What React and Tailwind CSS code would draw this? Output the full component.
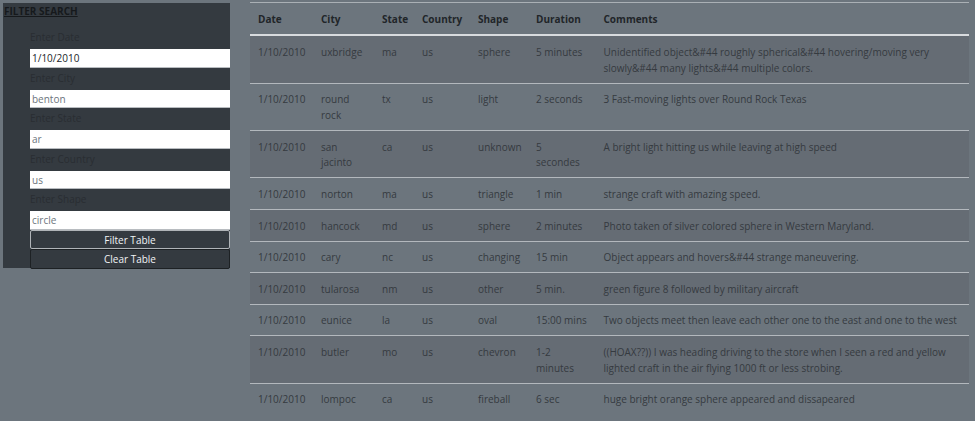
import React from 'react';

const sightings = [
  { city: 'uxbridge', state: 'ma', shape: 'sphere', duration: '5 minutes', comments: 'Unidentified object&#44 roughly spherical&#44 hovering/moving very slowly&#44 many lights&#44 multiple colors.' },
  { city: 'round rock', state: 'tx', shape: 'light', duration: '2 seconds', comments: '3 Fast-moving lights over Round Rock Texas' },
  { city: 'san jacinto', state: 'ca', shape: 'unknown', duration: '5 secondes', comments: 'A bright light hitting us while leaving at high speed' },
  { city: 'norton', state: 'ma', shape: 'triangle', duration: '1 min', comments: 'strange craft with amazing speed.' },
  { city: 'hancock', state: 'md', shape: 'sphere', duration: '2 minutes', comments: 'Photo taken of silver colored sphere in Western Maryland.' },
  { city: 'cary', state: 'nc', shape: 'changing', duration: '15 min', comments: 'Object appears and hovers&#44 strange maneuvering.' },
  { city: 'tularosa', state: 'nm', shape: 'other', duration: '5 min.', comments: 'green figure 8 followed by military aircraft' },
  { city: 'eunice', state: 'la', shape: 'oval', duration: '15:00 mins', comments: 'Two objects meet then leave each other one to the east and one to the west' },
  { city: 'butler', state: 'mo', shape: 'chevron', duration: '1-2 minutes', comments: '((HOAX??)) I was heading driving to the store when I seen a red and yellow lighted craft in the air flying 1000 ft or less strobing.' },
  { city: 'lompoc', state: 'ca', shape: 'fireball', duration: '6 sec', comments: 'huge bright orange sphere appeared and dissapeared' },
];

const filters = [
  { label: 'Enter Date', value: '1/10/2010', dark: true },
  { label: 'Enter City', value: 'benton' },
  { label: 'Enter State', value: 'ar' },
  { label: 'Enter Country', value: 'us' },
  { label: 'Enter Shape', value: 'circle' },
];

const th = 'px-2 pt-[8.5px] pb-[7px] text-left font-bold text-[#212529]';
const td = 'px-2 pt-[8.6px] pb-[6.2px] align-top border-t border-[#b3b8bd]';

const App = () => {
  return (
    <main
      className="flex min-h-screen items-start bg-[#6c757d] text-[10px] leading-[15.8px]"
      style={{ fontFamily: '"Open Sans", "Noto Sans", sans-serif' }}
    >
      <aside className="ml-[3px] mt-[3px] h-[265px] w-[227px] flex-none bg-[#343a40]">
        <h2 className="pl-[1px] font-bold leading-[16px] text-[#16191c] underline">FILTER SEARCH</h2>
        <div className="mt-[8px] pl-[27px]">
          {filters.map((f) => (
            <div key={f.label}>
              <label className="block h-[22px] pt-[2px] leading-[16px] text-[#292d32]">{f.label}</label>
              <input
                readOnly
                value={f.value}
                className={`block h-[18.5px] w-full border-b border-[#b8bcc0] bg-white px-[2px] pt-[1px] text-[10px] outline-none ${f.dark ? 'text-[#212529]' : 'text-[#6c757d]'}`}
              />
            </div>
          ))}
          <button className="block h-[19.5px] w-full rounded-[2px] border border-[#b0b4b8] bg-[#343a40] pt-[2px] leading-[15px] text-[#f1f3f5]">Filter Table</button>
          <button className="block h-[19.5px] w-full rounded-[2px] border border-[#1d2124] bg-[#343a40] pt-[2px] leading-[15px] text-[#f1f3f5]">Clear Table</button>
        </div>
      </aside>

      <section className="ml-[20px] mt-[2px] w-[719px] flex-none">
        <table className="w-full table-fixed border-collapse text-[#353a40]">
          <colgroup>
            <col className="w-[63px]" />
            <col className="w-[61px]" />
            <col className="w-[40px]" />
            <col className="w-[56px]" />
            <col className="w-[58px]" />
            <col className="w-[67.5px]" />
            <col />
          </colgroup>
          <thead>
            <tr className="border-t border-b-2 border-t-[#aab0b5] border-b-[#d8dbde]">
              <th className={th}>Date</th>
              <th className={th}>City</th>
              <th className={th}>State</th>
              <th className={th}>Country</th>
              <th className={th}>Shape</th>
              <th className={th}>Duration</th>
              <th className={th}>Comments</th>
            </tr>
          </thead>
          <tbody>
            {sightings.map((s, i) => (
              <tr key={s.city} className={i % 2 === 0 ? 'bg-[#656c74]' : ''}>
                <td className={td}>1/10/2010</td>
                <td className={td}>{s.city}</td>
                <td className={td}>{s.state}</td>
                <td className={td}>us</td>
                <td className={td}>{s.shape}</td>
                <td className={td}>{s.duration}</td>
                <td className={td}>{s.comments}</td>
              </tr>
            ))}
          </tbody>
        </table>
      </section>
    </main>
  );
};

export default App;
